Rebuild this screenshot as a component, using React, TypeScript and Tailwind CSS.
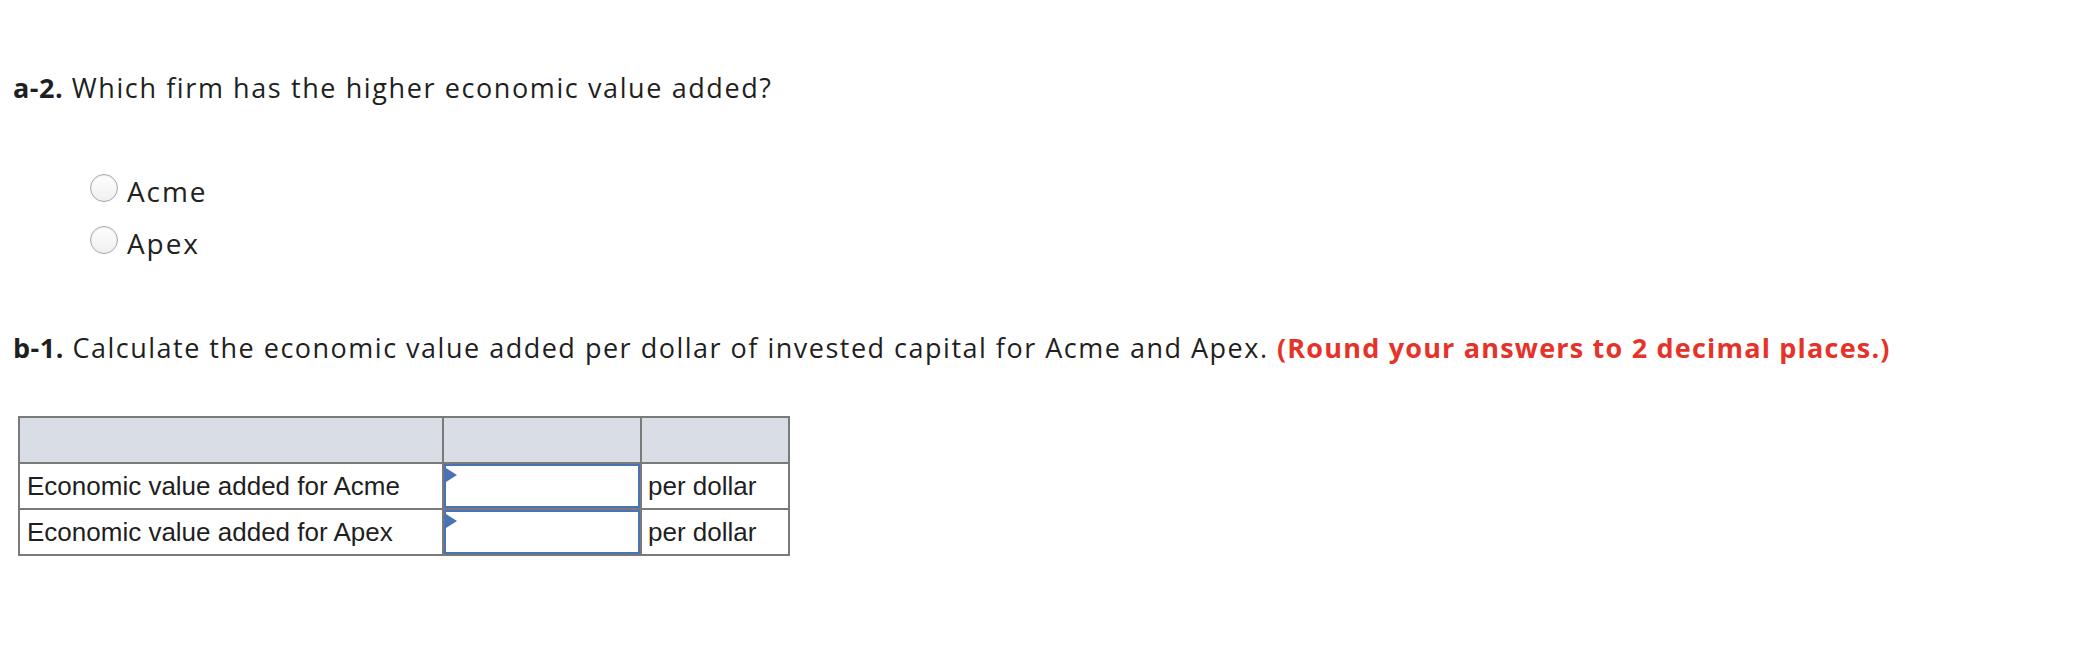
import React from "react";

const Radio = ({ label }: { label: string }) => (
  <div className="flex h-[52px] items-center">
    <span className="block h-[28px] w-[28px] rounded-full border border-[#a8a8a8] bg-gradient-to-b from-white to-[#efefef] shadow-[inset_0_1px_2px_rgba(0,0,0,0.08)]" />
    <span className="ml-[9px] mt-[6px] text-[28px] leading-[32px] tracking-[1.9px] text-[#222]">{label}</span>
  </div>
);

const InputCell = () => (
  <div className="relative h-full w-full border-2 border-[#4a73b5] bg-white">
    <svg className="absolute left-0 top-[2px]" width="11" height="14" viewBox="0 0 11 14">
      <polygon points="0,0 11,7 0,14" fill="#4a73b5" />
    </svg>
  </div>
);

export default function App() {
  return (
    <div
      className="h-[650px] w-[2078px] bg-white pl-[13px] pt-[72px] text-[#1f1f1f]"
      style={{ fontFamily: "'Open Sans', Lato, sans-serif" }}
    >
      <p className="text-[27px] leading-[32px] tracking-[1.6px]">
        <b className="font-bold tracking-[0.5px]">a-2.</b> Which firm has the higher economic value added?
      </p>

      <div className="mt-[58px] pl-[77px]">
        <Radio label="Acme" />
        <Radio label="Apex" />
      </div>

      <p className="mt-[66px] text-[27px] leading-[32px] tracking-[1.5px]">
        <b className="font-bold tracking-[0.5px]">b-1.</b> Calculate the economic value added per dollar of invested capital for Acme and Apex.{" "}
        <b className="font-bold tracking-[1.2px] text-[#e5332a]">(Round your answers to 2 decimal places.)</b>
      </p>

      <div
        className="ml-[5px] mt-[52px] w-[772px] border-2 border-[#7a7a7a] text-[26px] leading-[30px] text-[#1f1f1f]"
        style={{ fontFamily: "'Liberation Sans', Arial, sans-serif" }}
      >
        <div className="flex h-[46px] border-b-2 border-[#7a7a7a] bg-[#d9dee6]">
          <div className="w-[424px] border-r-2 border-[#7a7a7a]" />
          <div className="w-[198px] border-r-2 border-[#7a7a7a]" />
          <div className="flex-1" />
        </div>
        <div className="flex h-[46px] border-b-2 border-[#7a7a7a]">
          <div className="flex w-[424px] items-center border-r-2 border-[#7a7a7a] pl-[7px]">Economic value added for Acme</div>
          <div className="w-[198px] border-r-2 border-[#7a7a7a]"><InputCell /></div>
          <div className="flex flex-1 items-center pl-[6px]">per dollar</div>
        </div>
        <div className="flex h-[44px]">
          <div className="flex w-[424px] items-center border-r-2 border-[#7a7a7a] pl-[7px]">Economic value added for Apex</div>
          <div className="w-[198px] border-r-2 border-[#7a7a7a]"><InputCell /></div>
          <div className="flex flex-1 items-center pl-[6px]">per dollar</div>
        </div>
      </div>
    </div>
  );
}
